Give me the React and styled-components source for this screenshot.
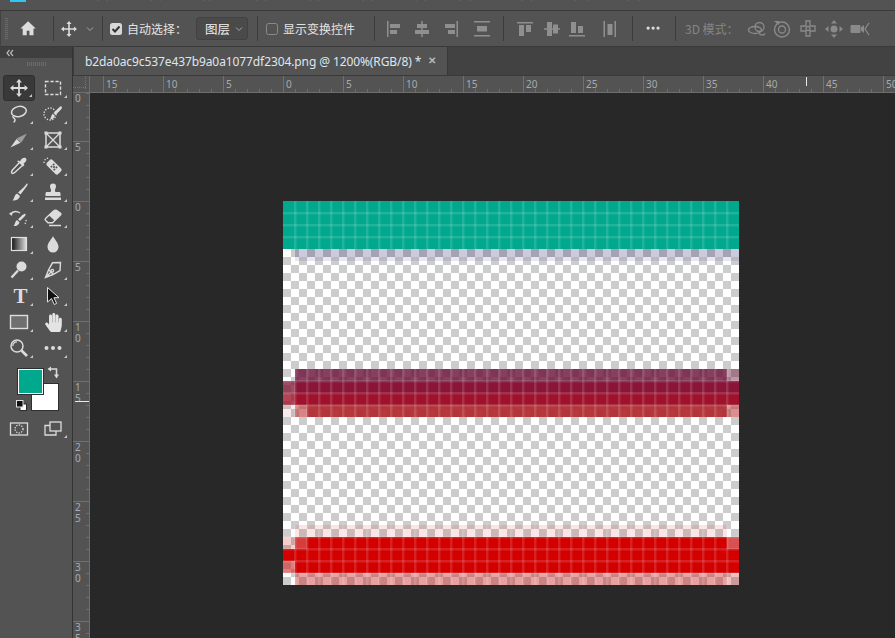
import React from "react";
import styled, { createGlobalStyle } from "styled-components";
import { FaHandPaper } from "react-icons/fa";

const Global = createGlobalStyle`
  html, body { margin: 0; padding: 0; background: #282828; }
  * { box-sizing: border-box; }
`;

const UI = `"Noto Sans", "Noto Sans CJK SC", sans-serif`;
const CJK = `"Noto Sans CJK SC", "Noto Sans", sans-serif`;

const Page = styled.div`
  width: 895px; height: 638px; overflow: hidden;
  display: flex; flex-direction: column;
  background: #535353; color: #e6e6e6;
  font-family: ${UI};
`;

/* ---------- menu (only its lower edge is in frame) ---------- */
const MenuBar = styled.div`
  height: 11px; flex: none; display: flex; align-items: flex-start;
  background: #535353; border-bottom: 1px solid #3a3a3a;
  padding-left: 10px; overflow: hidden;
`;
const Logo = styled.div`
  width: 16px; height: 2px; flex: none; margin-right: 45px;
  border: 1px solid #2fc6f4; border-top: 0; border-width: 0 2px 2px;
`;
const MenuItem = styled.span`
  width: ${p => p.$w || 53}px; flex: none; display: block;
  font: 12px/16px ${CJK}; color: #fff; white-space: nowrap;
  margin-top: -15px; height: 16px;
`;

/* ---------- options bar ---------- */
const OptionsBar = styled.div`
  height: 36px; flex: none; display: flex; align-items: center;
  background: #535353; border-bottom: 1px solid #3a3a3a; border-left: 1px solid #424242;
`;
const Grip = styled.div`
  width: 3px; height: 22px; margin-left: 4px; flex: none;
  background: repeating-linear-gradient(to bottom, #6a6a6a 0 1px, transparent 1px 2px);
`;
const Sep = styled.div`
  width: 1px; height: 25px; flex: none; background: #3c3c3c;
  margin-left: ${p => p.$l}px; margin-right: ${p => p.$r}px;
`;
const Slot = styled.div`
  flex: none; display: flex; align-items: center; justify-content: center;
  width: ${p => p.$w}px; margin-left: ${p => p.$l || 0}px;
`;
const Check = styled.div`
  width: 12px; height: 12px; flex: none; border-radius: 2.5px;
  display: flex; align-items: center; justify-content: center;
  margin-left: ${p => p.$l || 0}px;
  background: ${p => (p.$on ? "#d8d8d8" : "transparent")};
  border: ${p => (p.$on ? "0" : "1px solid #8a8a8a")};
`;
const OptLabel = styled.span`
  font: 12px/16px ${CJK}; color: ${p => p.$dim ? "#858585" : "#e4e4e4"};
  white-space: nowrap; flex: none; margin-left: ${p => p.$l || 0}px;
  width: ${p => p.$w}px;
`;
const Select = styled.div`
  width: 52px; height: 23px; flex: none; margin-left: 14px; padding: 0 3px 0 8px;
  display: flex; align-items: center; justify-content: space-between;
  background: #4a4a4a; border: 1px solid #424242; border-radius: 3px;
  font: 12.5px/16px ${CJK}; color: #f0f0f0;
`;

/* ---------- body ---------- */
const Body = styled.div`
  flex: 1; min-height: 0; display: flex;
`;
const ToolPanel = styled.div`
  width: 73px; flex: none; display: flex; flex-direction: column;
  background: #535353; border-right: 1px solid #333;
`;
const PanelHead = styled.div`
  height: 11px; background: #3f3f3f; display: flex; align-items: center; padding-left: 6px;
`;
const PanelGrip = styled.div`
  height: 17px; display: flex; justify-content: center; padding-top: 4px;
  &::before { content: ""; width: 19px; height: 4px;
    background: repeating-linear-gradient(to right, #6c6c6c 0 1px, transparent 1px 2px); }
`;
const ToolGrid = styled.div`
  display: grid; grid-template-columns: 34px 34px; grid-auto-rows: 26px; padding-left: 2px;
`;
const ToolBtn = styled.div`
  position: relative; display: flex; align-items: center; justify-content: center;
  border-radius: 3px; margin: 0 1px; width: 32px;
  background: ${p => (p.$active ? "#393939" : "transparent")};
  border: ${p => (p.$active ? "1px solid #2e2e2e" : "0")};
  ${p => p.$corner !== false ? `&::after { content: ""; position: absolute; right: 2px; bottom: 3px; width: 0; height: 0;
    border-left: 3px solid transparent; border-bottom: 3px solid #c8c8c8; }` : ""}
`;
const TypeGlyph = styled.span`
  font: bold 21px/20px "Liberation Serif", serif; color: #dcdcdc; margin-left: 3px;
`;
const Swatches = styled.div`
  position: relative; height: 56px;
`;
const Swatch = styled.div`
  position: absolute; left: ${p => p.$x}px; top: ${p => p.$y}px;
  width: ${p => p.$s}px; height: ${p => p.$s}px; background: ${p => p.$c};
  border: 1px solid ${p => p.$in || "#fff"}; outline: 1px solid #2f2f2f;
`;
const SwapIcon = styled.div`
  position: absolute; left: 47px; top: 5px; line-height: 0;
`;
const DefaultIcon = styled.div`
  position: absolute; left: 16px; top: 39px; line-height: 0;
`;
const ScreenRow = styled.div`
  display: grid; grid-template-columns: 34px 34px; padding-left: 2px; height: 24px;
`;

const Workspace = styled.div`
  flex: 1; min-width: 0; display: flex; flex-direction: column;
`;
const TabBar = styled.div`
  height: 29px; flex: none; display: flex; background: #424242; border-bottom: 1px solid #3a3a3a;
`;
const Tab = styled.div`
  width: 375px; flex: none; padding-left: 11px; display: flex; align-items: center;
  background: #535353; border-right: 1px solid #383838;
  border-left: 1px solid #3d3d3d;
  font-size: 12px; letter-spacing: -0.1px; color: #dfe6ee; white-space: nowrap;
`;
const TabClose = styled.span`
  margin-left: 7px; font: bold 10px/12px "Liberation Sans", sans-serif; color: #b8b8b8;
`;
const RulerRow = styled.div`
  height: 17px; flex: none; display: flex; position: relative;
`;
const Corner = styled.div`
  width: 17px; flex: none; background: #535353;
  border-right: 1px solid #6e6e6e; border-bottom: 1px solid #6e6e6e;
  background-image:
    repeating-linear-gradient(to right, #747474 0 1px, transparent 1px 2px),
    repeating-linear-gradient(to bottom, #747474 0 1px, transparent 1px 2px);
  background-size: 14px 1px, 1px 14px;
  background-position: 0 11px, 12px 0;
  background-repeat: no-repeat;
`;
const HRuler = styled.div`
  flex: 1; display: flex; overflow: hidden; background: #535353;
  border-bottom: 1px solid #6e6e6e; padding-left: 13px;
`;
const HMark = styled.div`
  width: 60px; flex: none; height: 16px; padding: 2px 0 0 2px;
  border-left: 1px solid #707070;
  font: 10px/12px ${UI}; color: #a5abb2;
  background-image: repeating-linear-gradient(to right, transparent 0 11px, #6e6e6e 11px 12px);
  background-size: 100% 3px; background-position: 0 100%; background-repeat: no-repeat;
`;
const HCursor = styled.div`
  position: absolute; left: 733px; top: 1px; width: 1px; height: 9px; background: #e8e8e8;
`;
const MainRow = styled.div`
  flex: 1; min-height: 0; display: flex; position: relative;
`;
const VRuler = styled.div`
  width: 17px; flex: none; overflow: hidden; background: #535353;
  border-right: 1px solid #6e6e6e;
`;
const VMarks = styled.div`
  margin-top: -12px; display: flex; flex-direction: column;
`;
const VMark = styled.div`
  height: 60px; flex: none; padding: 0 0 0 2px;
  border-top: 1px solid #707070;
  display: flex; flex-direction: column;
  font: 10px/11px ${UI}; color: #a5abb2;
  background-image: repeating-linear-gradient(to bottom, transparent 0 11px, #6e6e6e 11px 12px);
  background-size: 3px 100%; background-position: 100% 0; background-repeat: no-repeat;
`;
const VCursor = styled.div`
  position: absolute; left: 2px; top: 308px; height: 1px; width: 14px; background: #e8e8e8;
`;
const Canvas = styled.div`
  flex: 1; min-width: 0; background: #282828;
  padding: 108px 0 0 193px;
`;
const Picture = styled.svg`
  display: block; width: 456px; height: 384px;
`;

/* ---------- icons ---------- */
const Svg = styled.svg`
  display: block; flex: none; overflow: visible;
  color: ${p => p.$c || "#dcdcdc"};
`;
const I = ({ s = 20, c, children, vb }) => (
  <Svg $c={c} width={s} height={s} viewBox={vb || "0 0 20 20"} fill="none" stroke="currentColor" strokeWidth="1.3">
    {children}
  </Svg>
);
const F = { fill: "currentColor", stroke: "none" };

const MoveIcon = ({ s = 18 }) => (
  <I s={s}>
    <path d="M10 3v14M3 10h14" strokeWidth="2" />
    <path {...F} d="M10 0l3.200 3.800H6.800zM10 20l-3.200-3.800h6.400zM0 10l3.800-3.200v6.400zM20 10l-3.800 3.200V6.800z" />
  </I>
);
const tools = [
  [<MoveIcon />, <I><rect x="2.500" y="3.500" width="15" height="13" strokeDasharray="3.200 1.800" strokeWidth="1.400" /></I>],
  [<I><ellipse cx="10" cy="7.500" rx="7.500" ry="5" strokeWidth="1.500" transform="rotate(-12 10 8)" /><path d="M4 12c-1 2 2 2 2 3.500S5 18 4.500 18" strokeWidth="1.400" /></I>,
   <I><circle cx="7" cy="10" r="6" strokeDasharray="1.300 1.500" strokeWidth="1.400" /><path {...F} d="M18.500 2.500c1 1 .4 2-1 3.500L12.500 11l-2-2 5-5c1.400-1.300 2-2.500 3-1.500zM9.800 9.800l2 2c-.5 2.500-2.500 4-5 3.500 1.500-1.500 1.500-4.500 3-5.500z" /></I>],
  [<I><path {...F} d="M1.500 17.500L7.500 9l4 3.800z" /><path fill="#9c9c9c" stroke="none" d="M7.500 8.500L18 3.500l-5.800 9.300z" /></I>,
   <I><rect x="3" y="3" width="14" height="14" strokeWidth="1.500" /><path d="M3 3l14 14M17 3L3 17" /><path {...F} d="M1.500 1.500h3v3h-3zM15.500 1.500h3v3h-3zM1.500 15.500h3v3h-3zM15.500 15.500h3v3h-3z" /></I>],
  [<I><path d="M10.500 6.500L3.500 14c-1.500 2-1 2.800-.5 3.200.6.500 1.500.4 3-1l7.500-6.700" strokeWidth="1.400" /><path {...F} d="M9.500 4.500l1.500 1c1-2.500 3.500-4.500 5.500-3.500 2 1.500.5 4-2 5.500l1 1.500-1.500 1.500-6-5.500z" /></I>,
   <I><g transform="rotate(45 11 11)"><rect x="3" y="7" width="16" height="8" rx="2" {...F} /><g fill="#535353" stroke="none"><circle cx="9" cy="9.500" r="1" /><circle cx="13" cy="9.500" r="1" /><circle cx="9" cy="12.500" r="1" /><circle cx="13" cy="12.500" r="1" /><circle cx="11" cy="11" r="1" /></g></g><path d="M1 7c0-3 2-5 5-5" strokeDasharray="1.300 1.500" /></I>],
  [<I><path {...F} d="M18.500 1.500c.7.700-.5 2.500-2 4.500l-5 6.500-2.500-2L15 5c1.500-1.800 2.800-4 3.500-3.500zM8 11.500l3 2.400c-.8 3.200-4 5-7.500 4.600C5.500 17 5 13 8 11.500z" /></I>,
   <I><path {...F} d="M10 1.500a3 3 0 0 1 3 3c0 1.500-1 2.200-1 4 0 1 .5 1.500 1.200 1.500H16c1 0 1.500.7 1.500 1.500V14h-15v-2.500c0-.8.500-1.500 1.500-1.500h2.800c.7 0 1.200-.5 1.200-1.500 0-1.800-1-2.500-1-4a3 3 0 0 1 3-3zM2 15.500h16V18H2z" /></I>],
  [<I><path {...F} d="M16.500 6c.6.600-.5 2-2 3.500L11 13l-2-1.800L12.500 8C14 6.500 15.800 5.300 16.500 6zM8 12l2.500 2.200c-.5 2.800-3.500 4.300-6 3.800C6 17 5.500 14 8 12z" /><path d="M1 6.500C4 3 8 3 11 5" strokeWidth="1.400" /><path {...F} d="M0 5l3.500-.5L3 8z" /><path d="M17 12c.5 1.500-.5 3.500-2 4.500" strokeDasharray="1.300 1.500" strokeWidth="1.400" /></I>,
   <I><path d="M10.500 3L2.500 10.500c-.6.600-.6 1.200 0 1.800l2.500 2.400h4.500L17.500 7c.6-.6.600-1.200 0-1.800L14.500 3c-1.200-1.200-2.800-1.200-4 0z" strokeWidth="1.400" /><path {...F} d="M10.500 3L5.800 7.300 11.500 12.500 17.500 7c.6-.6.600-1.200 0-1.800L14.500 3c-1.200-1.200-2.800-1.200-4 0z" /><path d="M6 17.500h12" strokeWidth="1.500" /></I>],
  [<Svg width="20" height="20" viewBox="0 0 20 20"><defs><linearGradient id="g1"><stop offset="0" stopColor="#111" /><stop offset="1" stopColor="#e0e0e0" /></linearGradient></defs><rect x="1" y="3" width="15" height="13" fill="url(#g1)" stroke="#e0e0e0" strokeWidth="1.200" transform="translate(1.500 .5)" /></Svg>,
   <I><path {...F} d="M10 2c1 3 5.500 6.500 5.500 11a5.500 5.500 0 0 1-11 0C4.500 8.500 9 5 10 2z" /></I>],
  [<I><circle cx="12.500" cy="6.500" r="5" {...F} /><path d="M9 10.500L2.500 17.500" strokeWidth="2.400" /></I>,
   <I><path d="M17.500 2.500L9.500 2.800 5.500 10 2.500 17.500 10 14.500 17 10.500zM2.800 17.200l5.500-5.500" strokeWidth="1.400" /><path d="M6 10l4.500 4.500" strokeWidth="1.400" /><circle cx="9.300" cy="10.700" r="1.300" /></I>],
  [<TypeGlyph>T</TypeGlyph>, <I><path d="M4.500 1.500v14.500l4-3.500 2.800 6 2.300-1.100-2.700-5.700h5.100z" fill="#111" stroke="#e4e4e4" strokeWidth="1" /></I>],
  [<Svg width="20" height="20" viewBox="0 0 20 20"><rect x="1.500" y="3.500" width="17" height="13" fill="#6f6f6f" stroke="#dedede" strokeWidth="1.400" /></Svg>,
   <Svg $c="#e4e4e4" as={FaHandPaper} size={19} />],
  [<I><circle cx="8" cy="8" r="6" strokeWidth="1.500" /><path d="M3.800 8a4.200 4.200 0 0 1 4.200-4.200" /><path d="M12.500 12.500L18 18" strokeWidth="2.600" /></I>,
   <I><g {...F}><circle cx="3.500" cy="10" r="2" /><circle cx="10" cy="10" r="2" /><circle cx="16.500" cy="10" r="2" /></g></I>],
];

const Bars = ({ children }) => <I s={20} c="#8f8f8f"><g fill="#8f8f8f" stroke="none">{children}</g></I>;
const R = p => <rect {...p} />;

const marks = ["15", "10", "5", "0", "5", "10", "15", "20", "25", "30", "35", "40", "45", "50"];
const vmarks = ["10", "5", "0", "5", "10", "15", "20", "25", "30", "35"];
const menu = ["文件(F)", "编辑(E)", "图像(I)", "图层(L)", "文字(Y)", "选择(S)", "滤镜(T)", "3D(D)", "视图(V)", "窗口(W)", "帮助(H)", "增效工具"];

const Chevron = ({ c = "#a8a8a8" }) => (
  <I s={10} c={c} vb="0 0 10 10"><path d="M2 3.500l3 3 3-3" strokeWidth="1" /></I>
);

function Image() {
  const C = 12;
  const cell = (c, r, w, fill, op, h = 1) => (
    <rect key={`${c}-${r}-${fill}-${op}`} x={c * C} y={r * C} width={w * C} height={h * C} fill={fill} opacity={op} />
  );
  // pixel grid: soft on painted bands, barely visible on the transparent checker
  const grid = [];
  const areas = [[0, 48, 0.13], [48, 120, 0.03], [168, 48, 0.13], [216, 108, 0.03], [324, 60, 0.13]];
  areas.forEach(([y, hgt, o]) => {
    for (let i = 1; i < 38; i++) grid.push(<rect key={`v${y}-${i}`} x={i * C - 1} y={y} width={2.5} height={hgt} fill="#fff" opacity={o} />);
    for (let j = 1; j * C < hgt; j++) grid.push(<rect key={`h${y}-${j}`} x={0} y={y + j * C - 1} width={456} height={2.5} fill="#fff" opacity={o} />);
  });
  return (
    <Picture viewBox="0 0 456 384">
      <defs>
        <pattern id="chk" width="16" height="16" patternUnits="userSpaceOnUse">
          <rect width="16" height="16" fill="#fff" />
          <rect x="8" width="8" height="8" fill="#ccc" />
          <rect y="8" width="8" height="8" fill="#ccc" />
        </pattern>
      </defs>
      <rect width="456" height="384" fill="url(#chk)" />
      {cell(0, 0, 38, "#00a88e", 1, 4)}
      <rect x="12" y="48" width="444" height="8" fill="#141464" opacity="0.22" />
      <rect x="12" y="56" width="444" height="4" fill="#141464" opacity="0.1" />

      {cell(1, 14, 36, "#6e143c", 0.82)}
      {cell(37, 14, 1, "#6e143c", 0.45)}
      {cell(0, 15, 1, "#871e3c", 0.8)}
      {cell(1, 15, 37, "#8a1538", 1)}
      {cell(0, 16, 1, "#a0142d", 0.8)}
      {cell(1, 16, 37, "#a0122b", 1)}
      {cell(0, 17, 1, "#be3c3c", 0.1)}
      {cell(1, 17, 1, "#be3232", 0.6)}
      {cell(2, 17, 35, "#af2a2d", 0.93)}
      {cell(37, 17, 1, "#be3232", 0.55)}

      {cell(1, 27, 36, "#d20000", 0.1)}
      {cell(0, 28, 1, "#d20000", 0.2)}
      {cell(1, 28, 1, "#d83c3c", 1)}
      {cell(2, 28, 35, "#d40000", 1)}
      {cell(37, 28, 1, "#d85050", 1)}
      {cell(0, 29, 38, "#d40000", 1)}
      {cell(0, 30, 1, "#d21e1e", 0.58)}
      {cell(1, 30, 37, "#d40000", 1)}
      {cell(1, 31, 36, "#c81e1e", 0.42)}
      {cell(37, 31, 1, "#c81e1e", 0.28)}
      {grid}
    </Picture>
  );
}

export default function App() {
  return (
    <Page>
      <Global />
      <MenuBar>
        <Logo />
        {menu.map(m => <MenuItem key={m}>{m}</MenuItem>)}
      </MenuBar>

      <OptionsBar>
        <Grip />
        <Slot $w={41}>
          <I s={18}><path {...F} d="M9 1.500L0.500 9.500H3V17h4.500v-5h3v5H15V9.500h2.500z" /></I>
        </Slot>
        <Sep $l={4} $r={6} />
        <Slot $w={18} $l={0}><MoveIcon s={16} /></Slot>
        <Slot $w={12} $l={6}><Chevron /></Slot>
        <Sep $l={6} $r={7} />
        <Check $on>
          <I s={10} c="#333" vb="0 0 10 10"><path d="M1.500 5l2.500 2.500L8.500 2.500" strokeWidth="2" /></I>
        </Check>
        <OptLabel $l={5} $w={55}>自动选择：</OptLabel>
        <Select>图层<Chevron /></Select>
        <Sep $l={9} $r={8} />
        <Check />
        <OptLabel $l={5} $w={72}>显示变换控件</OptLabel>
        <Sep $l={19} $r={10} />
        <Slot $w={20}><Bars><R x="2" y="2" width="1.500" height="16" /><R x="5" y="5" width="10" height="4" /><R x="5" y="11" width="7" height="4" /></Bars></Slot>
        <Slot $w={20} $l={7}><Bars><R x="9.200" y="2" width="1.500" height="16" /><R x="5" y="5" width="10" height="4" /><R x="3" y="11" width="14" height="4" /></Bars></Slot>
        <Slot $w={20} $l={8}><Bars><R x="16.500" y="2" width="1.500" height="16" /><R x="5" y="5" width="10" height="4" /><R x="8" y="11" width="7" height="4" /></Bars></Slot>
        <Slot $w={20} $l={12}><Bars><R x="2" y="2" width="16" height="1.500" /><R x="5" y="7" width="10" height="5.500" /><R x="2" y="16" width="16" height="1.500" /></Bars></Slot>
        <Sep $l={11} $r={11} />
        <Slot $w={20}><Bars><R x="2" y="3" width="16" height="1.500" /><R x="4" y="6" width="5" height="11" /><R x="11" y="6" width="5" height="7" /></Bars></Slot>
        <Slot $w={20} $l={7}><Bars><R x="2" y="9.200" width="16" height="1.500" /><R x="5" y="3" width="5" height="14" /><R x="11" y="5.500" width="5" height="9" /></Bars></Slot>
        <Slot $w={20} $l={5}><Bars><R x="2" y="16" width="16" height="1.500" /><R x="4" y="3" width="5" height="11" /><R x="11" y="7" width="5" height="7" /></Bars></Slot>
        <Slot $w={20} $l={13}><Bars><R x="3.500" y="2" width="1.500" height="16" /><R x="7.500" y="5" width="5" height="11" /><R x="14.500" y="2" width="1.500" height="16" /></Bars></Slot>
        <Sep $l={12} $r={11} />
        <Slot $w={20}><I s={18}><g {...F}><circle cx="3.500" cy="9" r="1.800" /><circle cx="9" cy="9" r="1.800" /><circle cx="14.500" cy="9" r="1.800" /></g></I></Slot>
        <Sep $l={11} $r={9} />
        <OptLabel $dim $w={56}>3D 模式：</OptLabel>
        <Slot $w={20} $l={6}><I c="#8a8a8a"><ellipse cx="8" cy="11" rx="6.500" ry="3.500" /><circle cx="12.500" cy="8" r="4.500" /><path d="M12 14.500c2 2 5 2 6 0" /></I></Slot>
        <Slot $w={20} $l={5}><I c="#8a8a8a"><circle cx="10" cy="10.500" r="7.500" strokeWidth="1.400" /><circle cx="10" cy="10.500" r="3.500" /><path {...F} d="M2 2h5v4z" /></I></Slot>
        <Slot $w={20} $l={6}><I c="#8a8a8a"><path d="M8 2h4v5h5v5h-5v5H8v-5H3V7h5z" strokeWidth="1.300" /><circle cx="10" cy="9.500" r="2" /></I></Slot>
        <Slot $w={20} $l={6}><I c="#8a8a8a"><circle cx="10" cy="10" r="3.500" {...F} /><path {...F} d="M10 1l3 3.500H7zM10 19l-3-3.500h6zM1 10l3.500-3v6zM19 10l-3.500 3V7z" /></I></Slot>
        <Slot $w={20} $l={6}><I c="#8a8a8a"><rect x="0.500" y="6" width="10" height="8" rx="1" {...F} /><path {...F} d="M11 8.500l3-2.500v8l-3-2.500z" /><path d="M19 4l-4 6 4 6" /></I></Slot>
      </OptionsBar>

      <Body>
        <ToolPanel>
          <PanelHead>
            <I s={8} c="#b8b8b8" vb="0 0 8 8"><path d="M3.500 1L1 4l2.500 3M7 1L4.500 4 7 7" strokeWidth="1.200" /></I>
          </PanelHead>
          <PanelGrip />
          <ToolGrid>
            {tools.map((row, r) => row.map((t, c) => (
              <ToolBtn key={`${r}-${c}`} $active={r === 0 && c === 0}
                $corner={!(r === 6 && c === 1)}>
                {t}
              </ToolBtn>
            )))}
          </ToolGrid>
          <Swatches>
            <Swatch $x={32} $y={23} $s={26} $c="#fff" />
            <Swatch $x={18} $y={8} $s={25} $c="#00a88e" />
            <SwapIcon>
              <I s={13} vb="0 0 13 13"><path d="M2 3h7.500v7" strokeWidth="1.500" /><path {...F} d="M4 .5v5L.5 3zM7 8.500h5L9.500 12.500z" /></I>
            </SwapIcon>
            <DefaultIcon>
              <I s={11} vb="0 0 11 11">
                <rect x="4" y="4" width="6.500" height="6.500" fill="#fff" stroke="#2a2a2a" strokeWidth="1" />
                <rect x="0.500" y="0.500" width="6.500" height="6.500" fill="#111" stroke="#e0e0e0" strokeWidth="1" />
              </I>
            </DefaultIcon>
          </Swatches>
          <ScreenRow>
            <ToolBtn $corner={false}>
              <I><rect x="1.500" y="4" width="17" height="12" /><circle cx="10" cy="10" r="4" strokeDasharray="1.300 1.300" /></I>
            </ToolBtn>
            <ToolBtn>
              <I><rect x="7" y="3" width="11" height="9" strokeWidth="1.300" /><path d="M7 6.500H2V16h11v-4" strokeWidth="1.300" /></I>
            </ToolBtn>
          </ScreenRow>
        </ToolPanel>

        <Workspace>
          <TabBar>
            <Tab>b2da0ac9c537e437b9a0a1077df2304.png @ 1200%(RGB/8) *<TabClose>✕</TabClose></Tab>
          </TabBar>
          <RulerRow>
            <Corner />
            <HRuler>{marks.map((m, i) => <HMark key={i}>{m}</HMark>)}</HRuler>
            <HCursor />
          </RulerRow>
          <MainRow>
            <VRuler>
              <VMarks>
                {vmarks.map((m, i) => (
                  <VMark key={i}>{m.split("").map((d, j) => <span key={j}>{d}</span>)}</VMark>
                ))}
              </VMarks>
            </VRuler>
            <VCursor />
            <Canvas><Image /></Canvas>
          </MainRow>
        </Workspace>
      </Body>
    </Page>
  );
}
